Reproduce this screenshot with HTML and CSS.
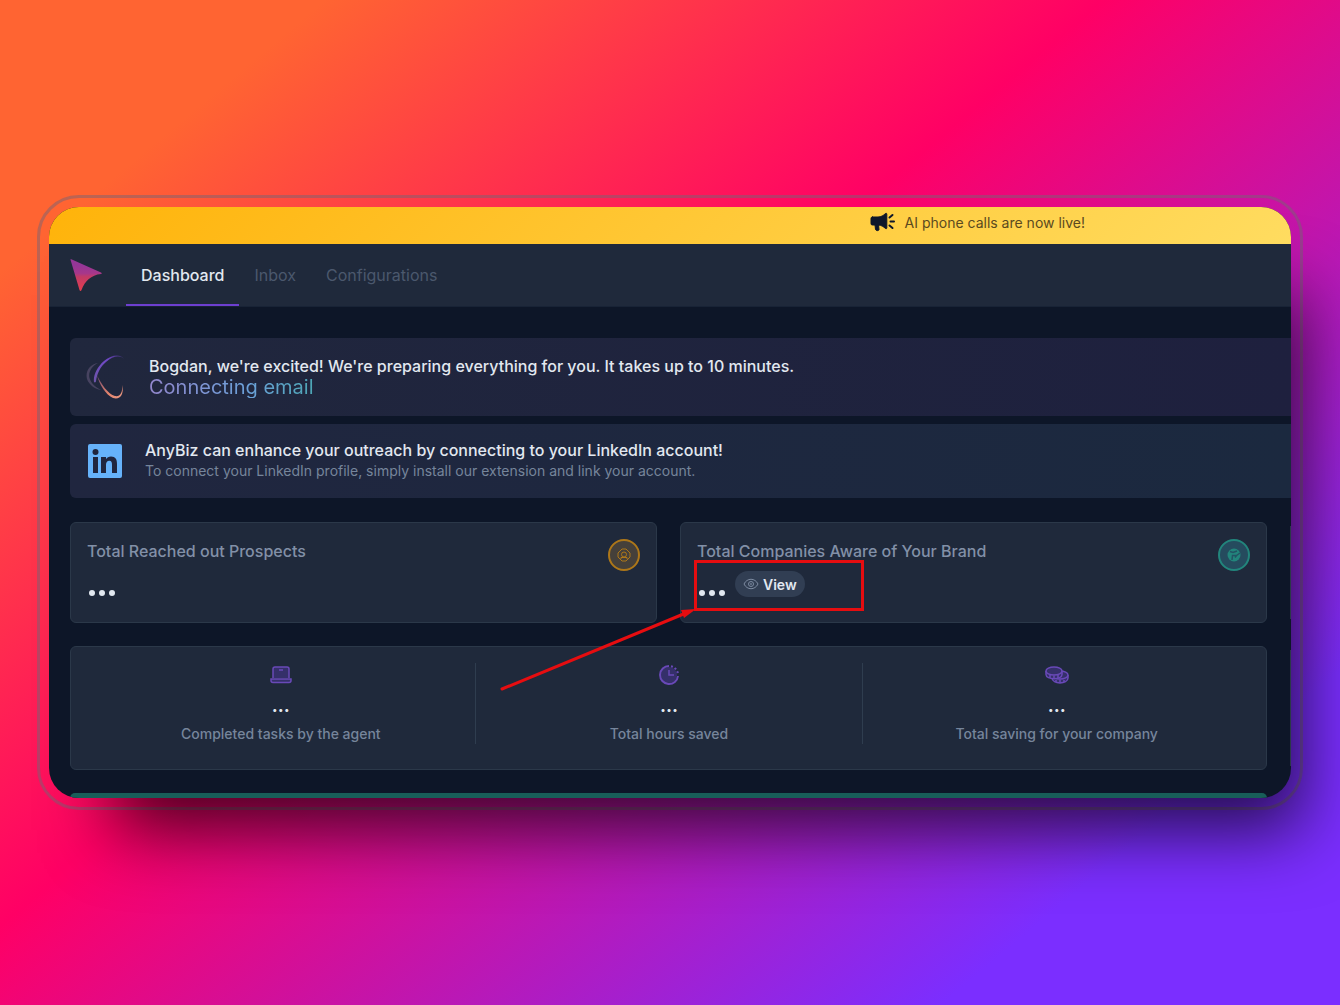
FILE: index.html
```
<!DOCTYPE html>
<html lang="en">
<head>
  <meta charset="UTF-8">
  <meta name="viewport" content="width=device-width, initial-scale=1.0">
  <title>AnyBiz - Dashboard</title>
  <link rel="stylesheet" href="styles.css">
</head>
<body>
  <div class="frame">
    <div class="window">
      <div class="announcement">
        <svg class="megaphone" width="26" height="22" viewBox="0 0 26 22" fill="#0f172a" stroke="#0f172a" stroke-linecap="round">
          <path d="M2.500 5H8C11 5 13.500 3.500 15.500 1.500C16 1 16.800 1.300 16.800 2V16C16.800 16.700 16 17 15.500 16.500C13.500 14.500 11 13.200 8.500 13L9 17.500C9 19 6 19 5.500 17.500L5 13H2.500C1.500 13 1 12.500 1 11.500V6.500C1 5.500 1.500 5 2.500 5Z"/>
          <path fill="none" stroke-width="2" d="M19.500 5.500L22.500 3M20.500 9.500H24M19.500 13.500L22.500 16"/>
        </svg>
        <span>AI phone calls are now live!</span>
      </div>

      <nav class="navbar">
        <a class="logo" href="#" aria-label="AnyBiz">
          <svg width="32" height="32" viewBox="0 0 32 32">
            <defs>
              <linearGradient id="logoGradient" x1="0" y1="0" x2="0" y2="1">
                <stop offset="0.200" stop-color="#953697"/>
                <stop offset="0.450" stop-color="#a7378a"/>
                <stop offset="0.550" stop-color="#c23a67"/>
                <stop offset="1" stop-color="#e43d4c"/>
              </linearGradient>
            </defs>
            <path fill="url(#logoGradient)" d="M0.500 0.800C0.300 0.300 0.800 0 1.300 0.200L31 13.500C32 14 32 14.800 31 15C21 16 15 22 11.500 31C11 32.200 10 32.200 9.500 31Z"/>
          </svg>
        </a>
        <a class="tab active" href="#">Dashboard</a>
        <a class="tab" href="#">Inbox</a>
        <a class="tab" href="#">Configurations</a>
      </nav>

      <main>
        <section class="banner banner-setup">
          <svg class="loader" width="40" height="46" viewBox="0 0 40 46" fill="none">
            <defs>
              <linearGradient id="orbitPurple" x1="1" y1="0" x2="0" y2="1">
                <stop offset="0" stop-color="#6d45c4" stop-opacity="0.300"/>
                <stop offset="0.350" stop-color="#7048c8"/>
                <stop offset="1" stop-color="#6d55a8"/>
              </linearGradient>
              <linearGradient id="orbitOrange" x1="0" y1="0" x2="1" y2="1">
                <stop offset="0" stop-color="#6a4870"/>
                <stop offset="0.600" stop-color="#e2826c"/>
                <stop offset="1" stop-color="#e99a84"/>
              </linearGradient>
            </defs>
            <path fill="#474360" d="M12 9C4 10 -1 17 1 25C3 31 9 35 15 36C9 33 5 29 3.500 24C2 18 6 12 12 9Z"/>
            <path fill="url(#orbitPurple)" d="M38 5C35 -0.500 25 0.500 18 7C11 13 7 22 8 28C9 29 10 28 10 27C11 20 14 13 20 8C27 2 34 1 38 5Z"/>
            <path fill="url(#orbitOrange)" d="M11 21C13 30 20 41 27 44C34 46 38 41 36.500 31C36.500 39 34 43 29 42C22 40 15 30 11 21Z"/>
          </svg>
          <div>
            <h2>Bogdan, we're excited! We're preparing everything for you. It takes up to 10 minutes.</h2>
            <p class="status">Connecting email</p>
          </div>
        </section>

        <section class="banner banner-linkedin">
          <svg class="linkedin" width="34" height="34" viewBox="0 0 34 34">
            <rect width="34" height="34" rx="2" fill="#66b2fa"/>
            <g fill="#20263f">
              <circle cx="7.500" cy="8" r="3"/>
              <path d="M5 13H10V29H5ZM13 13H18V15.200C19 13.600 20.800 12.600 23 12.600C27.500 12.600 29 15.500 29 20V29H24V21C24 18.500 23.600 16.800 21.300 16.800C19 16.800 18 18.500 18 21V29H13Z"/>
            </g>
          </svg>
          <div>
            <h2>AnyBiz can enhance your outreach by connecting to your LinkedIn account!</h2>
            <p class="hint">To connect your LinkedIn profile, simply install our extension and link your account.</p>
          </div>
        </section>

        <div class="stats">
          <section class="card stat">
            <div>
              <h3>Total Reached out Prospects</h3>
              <div class="value">
                <svg width="30" height="8" viewBox="0 0 30 8" fill="#e2e8f0" aria-label="Loading"><circle cx="5" cy="4" r="3"/><circle cx="15" cy="4" r="3"/><circle cx="25" cy="4" r="3"/></svg>
              </div>
            </div>
            <span class="badge badge-amber">
              <svg width="14" height="14" viewBox="0 0 14 14" fill="none" stroke="currentColor">
                <path d="M5 1H9L13 5V9L9 13H5L1 9V5Z"/>
                <circle cx="7" cy="6.500" r="2.500"/>
                <path d="M4 11V9.500H10V11"/>
              </svg>
            </span>
          </section>

          <section class="card stat highlighted">
            <div>
              <h3>Total Companies Aware of Your Brand</h3>
              <div class="value">
                <svg width="30" height="8" viewBox="0 0 30 8" fill="#e2e8f0" aria-label="Loading"><circle cx="5" cy="4" r="3"/><circle cx="15" cy="4" r="3"/><circle cx="25" cy="4" r="3"/></svg>
                <button class="view" type="button">
                  <svg width="16" height="12" viewBox="0 0 16 12" fill="none" stroke="#7c8aa0">
                    <path d="M1 6C4 -0.300 12 -0.300 15 6C12 12.300 4 12.300 1 6Z"/>
                    <circle cx="8" cy="6" r="2.500"/>
                    <circle cx="8" cy="6" r="0.500"/>
                  </svg>
                  View
                </button>
              </div>
            </div>
            <span class="badge badge-green">
              <svg width="14" height="14" viewBox="0 0 14 14" fill="none">
                <circle cx="7" cy="7" r="6.500" fill="currentColor"/>
                <path stroke="#225464" stroke-width="1.500" d="M3 3.500L6 4.500L10 3M13 5L9.500 7.500H5.500L5 12M9.500 7.500L8 9.500"/>
              </svg>
            </span>
            <div class="callout"></div>
            <svg class="arrow" width="200" height="88" viewBox="0 0 200 88" fill="#e60d10">
              <path stroke="#e60d10" stroke-width="3" stroke-linecap="round" d="M3 83L187 7"/>
              <path d="M197 3L185 12L182 4Z"/>
            </svg>
          </section>

          <div class="card next"></div>

          <section class="card summary">
            <div class="metric">
              <svg width="22" height="18" viewBox="0 0 22 18" fill="#35306a" stroke="#6949b8" stroke-width="1.500">
                <path d="M3 12V3C3 1.500 3.500 1 5 1H17C18.500 1 19 1.500 19 3V12"/>
                <path d="M1 13H21V14.500C21 16 20 16.500 19 16.500H3C2 16.500 1 16 1 14.500Z"/>
                <path fill="none" d="M9 4H13"/>
              </svg>
              <strong>...</strong>
              <span>Completed tasks by the agent</span>
            </div>
            <div class="metric">
              <svg width="20" height="20" viewBox="0 0 20 20" fill="none" stroke="#6949b8" stroke-width="2">
                <circle cx="10" cy="10" r="8" fill="#35306a" stroke="none"/>
                <path d="M10 1A9 9 0 1 0 19 11"/>
                <path stroke-dasharray="2 2" d="M12 1.300A9 9 0 0 1 19 9"/>
                <path stroke-width="1.500" d="M10 5V10H15"/>
              </svg>
              <strong>...</strong>
              <span>Total hours saved</span>
            </div>
            <div class="metric">
              <svg width="24" height="18" viewBox="0 0 24 18" fill="#35306a" stroke="#6949b8" stroke-width="1.500">
                <path d="M7 9V12C7 18.500 23 18.500 23 12V9"/>
                <ellipse cx="15" cy="9" rx="8" ry="4"/>
                <path d="M11 14V16M15 13.500V17M19 14V16"/>
                <path d="M1 5V8.500C1 14 17 14 17 8.500V5"/>
                <ellipse cx="9" cy="5" rx="8" ry="4"/>
                <path d="M5 9V12M9 9.500V12.500M13 9V12"/>
              </svg>
              <strong>...</strong>
              <span>Total saving for your company</span>
            </div>
          </section>

          <div class="card next"></div>
          <div class="card-green"></div>
        </div>
      </main>
    </div>
  </div>
</body>
</html>
```
FILE: styles.css
```
* {
  box-sizing: border-box;
}
body {
  margin: 0;
  min-height: 100vh;
  padding: 0 37px;
  display: flex;
  align-items: center;
  font-family: Inter, "Liberation Sans", sans-serif;
  font-size: 14px;
  color: #e2e8f0;
  background: linear-gradient(140deg, rgb(255, 100, 50) 12.8%, rgb(255, 0, 101) 43.5%, rgb(123, 46, 255) 84.3%);
}
h2, h3, p {
  margin: 0;
}
svg {
  display: block;
  flex-shrink: 0;
}
.frame {
  flex: 1;
  min-width: 0;
  padding: 9px;
  border: 3px solid rgba(120, 100, 115, 0.5);
  border-radius: 42px;
}
.window {
  overflow: hidden;
  border-radius: 30px;
  background: #0d1628;
  box-shadow: 38px 60px 70px -28px rgba(0, 0, 0, 0.7);
}

/* Top bar */
.announcement {
  display: flex;
  align-items: center;
  justify-content: flex-end;
  gap: 9px;
  height: 37px;
  padding: 0 206px 6px 0;
  color: #5b4a20;
  background: linear-gradient(135deg, #ffb30a, #ffdc60);
}
.navbar {
  display: flex;
  height: 63px;
  padding-left: 21px;
  background: #1f293b;
  border-bottom: 1px solid #182336;
}
.logo {
  align-self: center;
  margin-right: 24px;
}
.tab {
  display: flex;
  align-items: center;
  padding: 0 15px;
  font-size: 16px;
  color: #4b586d;
  text-decoration: none;
  border-top: 2px solid transparent;
  border-bottom: 2px solid transparent;
}
.tab.active {
  font-weight: 500;
  color: #e2e8f0;
  border-bottom-color: #6d3fd0;
}

/* Banners */
main {
  padding: 31px 0 0 21px;
}
.banner {
  display: flex;
  align-items: center;
  border-radius: 6px 0 0 6px;
}
.banner h2 {
  font-size: 16px;
  font-weight: 500;
  line-height: 20px;
}
.banner-setup {
  gap: 23px;
  height: 78px;
  margin-bottom: 8px;
  padding-left: 16px;
  background: linear-gradient(90deg, #20273d, #1e203e);
}
.banner-linkedin {
  gap: 23px;
  height: 74px;
  margin-bottom: 24px;
  padding-left: 18px;
  background: linear-gradient(90deg, #20263f, #1b293f);
}
.status {
  width: fit-content;
  font-size: 20px;
  line-height: 22px;
  color: transparent;
  background: linear-gradient(90deg, #9387cd, #6ba0d8 60%, #4da6b5);
  background-clip: text;
}
.hint {
  line-height: 22px;
  color: #76859b;
}

/* Cards */
.stats {
  display: grid;
  grid-template-columns: 1fr 1fr 1px;
  gap: 23px;
}
.card {
  background: #1f293b;
  border: 1px solid #2b3849;
  border-radius: 6px;
}
.next {
  border-width: 0 0 0 1px;
  border-radius: 0;
  margin: 4px 0;
}
.stat {
  display: flex;
  justify-content: space-between;
  height: 101px;
  padding: 16px;
}
.stat h3 {
  font-size: 16px;
  font-weight: 500;
  line-height: 24px;
  color: #8290a7;
}
.value {
  display: flex;
  align-items: flex-end;
  gap: 8px;
  height: 34px;
}
.view {
  display: flex;
  align-items: center;
  gap: 4px;
  height: 26px;
  padding: 0 8px;
  font-family: inherit;
  font-size: 14px;
  font-weight: 600;
  color: #e2e8f0;
  background: #313e53;
  border: none;
  border-radius: 13px;
}
.badge {
  display: flex;
  align-items: center;
  justify-content: center;
  width: 32px;
  height: 32px;
  border: 2px solid;
  border-radius: 50%;
}
.badge-amber {
  color: #ad7719;
  background: #45403a;
}
.badge-green {
  color: #22857c;
  background: #254b5e;
}
.summary {
  grid-column: 1 / 3;
  display: grid;
  grid-template-columns: 1fr 1fr 1fr;
  height: 124px;
  padding: 16px 16px 26px;
}
.metric {
  display: flex;
  flex-direction: column;
  align-items: center;
}
.metric + .metric {
  border-left: 1px solid #2f3d4f;
}
.metric svg {
  height: 24px;
}
.metric strong {
  margin-top: 7px;
  font-size: 18px;
  line-height: 24px;
}
.metric span {
  margin-top: 6px;
  font-weight: 500;
  line-height: 20px;
  color: #76859b;
}
.card-green {
  grid-column: 1 / 3;
  height: 5px;
  border-radius: 6px 6px 0 0;
  background: #185e59;
}

/* Callout drawn over the second card */
.highlighted {
  position: relative;
  z-index: 1;
}
.callout {
  position: absolute;
  top: 37px;
  left: 13px;
  width: 170px;
  height: 51px;
  border: 3px solid #e60d10;
}
.arrow {
  position: absolute;
  top: 83px;
  left: -182px;
}
```
